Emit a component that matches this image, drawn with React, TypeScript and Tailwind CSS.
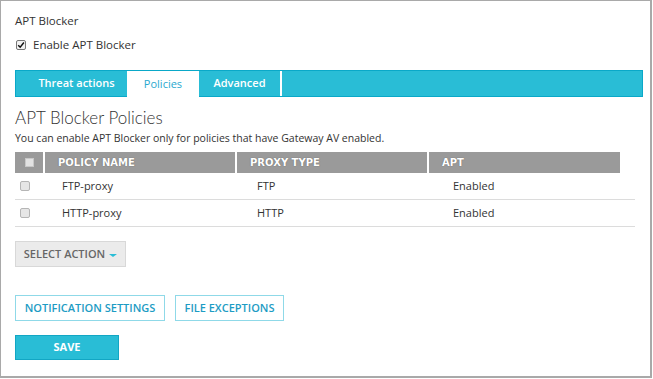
const policies = [
  { name: "FTP-proxy", type: "FTP", apt: "Enabled" },
  { name: "HTTP-proxy", type: "HTTP", apt: "Enabled" },
];

function Box({ checked = false }: { checked?: boolean }) {
  return (
    <span
      className={`flex h-[10px] w-[10px] items-center justify-center rounded-[2px] border ${
        checked ? "border-[#777] bg-[#f2f2f2]" : "border-[#b5b5b5] bg-[#e6e6e6]"
      }`}
    >
      {checked && (
        <svg viewBox="0 0 10 10" className="h-[8px] w-[8px]">
          <path d="M1.5 5.2 L4 7.8 L8.6 1.8" fill="none" stroke="#111" strokeWidth="1.8" />
        </svg>
      )}
    </span>
  );
}

export default function App() {
  return (
    <div className="h-[379px] w-[653px] bg-white font-['Open_Sans',sans-serif] text-[#333]">
      <div className="h-[378px] w-[652px] border-t border-l border-r-2 border-b-2 border-[#a9a9a9] px-[14px] pt-[12px]">
        {/* Header */}
        <div className="text-[11.5px] leading-[16px]">APT Blocker</div>
        <label className="mt-[8px] flex items-center gap-[7px] pl-[1px] text-[11.5px] leading-[16px]">
          <Box checked />
          Enable APT Blocker
        </label>

        {/* Tabs */}
        <div className="mt-[17px] flex h-[27px] w-[628px] border border-[#0aa8c8] bg-[#29bdd6]">
          <div className="flex w-[111px] items-center justify-center pl-[10px] text-[11px] font-semibold text-white">
            Threat actions
          </div>
          <div className="-mb-px -mt-px flex w-[72px] items-center justify-center border-t border-[#0aa8c8] bg-white text-[11px] text-[#29a9cf]">
            Policies
          </div>
          <div className="flex w-[83px] items-center justify-center border-r-2 border-white text-[11px] font-semibold text-white">
            Advanced
          </div>
        </div>

        {/* Policies */}
        <h2 className="mt-[10px] font-['Lato',sans-serif] text-[17px] font-light leading-[22px] text-[#333]">
          APT Blocker Policies
        </h2>
        <p className="mt-[1px] text-[10.5px] leading-[16px]">
          You can enable APT Blocker only for policies that have Gateway AV enabled.
        </p>

        <div className="mt-[6px] w-[620px]">
          <div className="flex h-[21px] w-[605px] bg-[#9a9a9a] font-['DejaVu_Sans',sans-serif] text-[10px] font-bold text-white [text-shadow:0_0_1px_#555]">
            <div className="flex w-[30px] items-center justify-center border-r-2 border-white">
              <span className="h-[9px] w-[9px] border border-[#c8c8c8] bg-[#e2e2e2]" />
            </div>
            <div className="flex w-[192px] items-center border-r-2 border-white pl-[13px]">POLICY NAME</div>
            <div className="flex w-[192px] items-center border-r-2 border-white pl-[13px]">PROXY TYPE</div>
            <div className="flex flex-1 items-center pl-[13px]">APT</div>
          </div>
          {policies.map((p) => (
            <div key={p.name} className="flex h-[27px] items-center border-b border-[#dcdcdc] text-[11px]">
              <div className="flex w-[30px] justify-start pl-[5px]">
                <Box />
              </div>
              <div className="w-[192px] pl-[17px]">{p.name}</div>
              <div className="w-[196px] pl-[20px]">{p.type}</div>
              <div className="pl-[20px]">{p.apt}</div>
            </div>
          ))}
        </div>

        {/* Actions */}
        <button className="mt-[14px] flex h-[26px] w-[111px] items-center justify-center gap-[4px] border border-[#d8d8d8] bg-[#ebebeb] text-[11px] font-semibold text-[#666]">
          SELECT ACTION
          <span className="mt-[2px] h-0 w-0 border-x-[4px] border-t-[3px] border-x-transparent border-t-[#29bdd6]" />
        </button>

        <div className="mt-[28px] flex gap-[10px]">
          <button className="h-[26px] w-[150px] border border-[#8fd9e8] text-[11px] font-semibold text-[#1d9cc4]">
            NOTIFICATION SETTINGS
          </button>
          <button className="h-[26px] w-[109px] border border-[#8fd9e8] text-[11px] font-semibold text-[#1d9cc4]">
            FILE EXCEPTIONS
          </button>
        </div>

        <button className="mt-[14px] h-[25px] w-[104px] border border-[#12a6c4] bg-[#29bdd6] text-[11px] font-bold text-white">
          SAVE
        </button>
      </div>
    </div>
  );
}
